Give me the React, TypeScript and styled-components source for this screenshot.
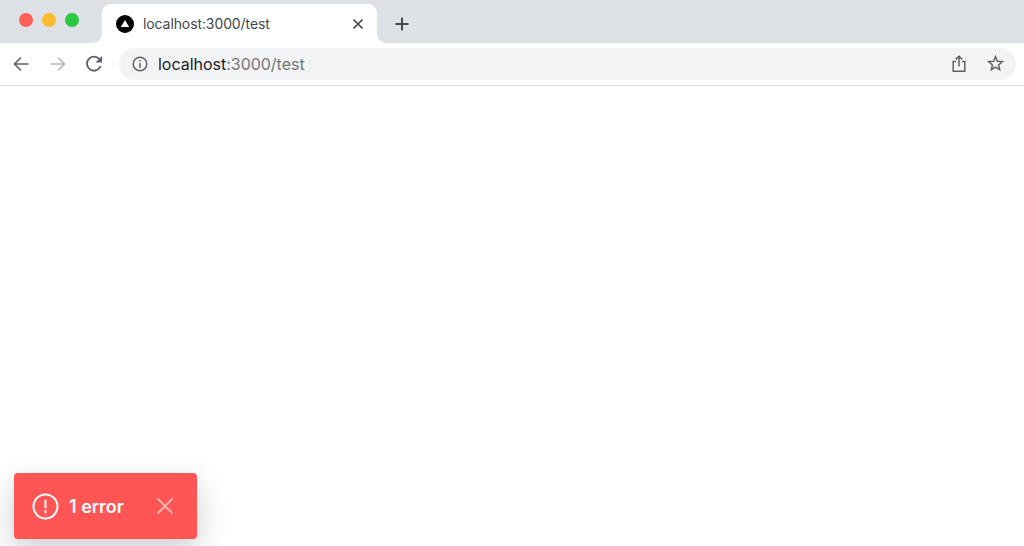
import React from "react";
import styled, { createGlobalStyle } from "styled-components";

const Global = createGlobalStyle`
  html, body { margin: 0; padding: 0; background: #fff; }
  body { font-family: Inter, "Liberation Sans", sans-serif; overflow: hidden; }
  #root { height: 546px; }
`;

const Page = styled.div`
  height: 546px;
  display: flex;
  flex-direction: column;
  position: relative;
`;

const TabStrip = styled.div`
  height: 43px;
  flex: none;
  background: #dee1e6;
  display: flex;
  align-items: flex-end;
  box-sizing: border-box;
`;

const Lights = styled.div`
  display: flex;
  gap: 9px;
  width: 102px;
  align-self: flex-start;
  box-sizing: border-box;
  padding: 13px 0 0 19px;
`;

const Light = styled.span<{ $c: string }>`
  width: 14px;
  height: 14px;
  border-radius: 50%;
  background: ${(p) => p.$c};
`;

const Tab = styled.div`
  position: relative;
  width: 275px;
  height: 39px;
  background: #fff;
  border-radius: 9px 9px 0 0;
  display: flex;
  align-items: center;
  box-sizing: border-box;
  padding: 0 13px 0 14px;
  &::before, &::after {
    content: "";
    position: absolute;
    bottom: 0;
    width: 9px;
    height: 9px;
  }
  &::before {
    left: -9px;
    background: radial-gradient(circle at 0 0, #dee1e6 8.5px, #fff 9px);
  }
  &::after {
    right: -9px;
    background: radial-gradient(circle at 100% 0, #dee1e6 8.5px, #fff 9px);
  }
`;

const TabTitle = styled.span`
  flex: 1;
  margin-left: 9px;
  font-size: 14px;
  letter-spacing: -0.1px;
  color: #45474a;
  white-space: nowrap;
`;

const NewTab = styled.div`
  width: 18px;
  height: 18px;
  margin: 0 0 10px 16px;
  display: flex;
`;

const Toolbar = styled.div`
  height: 43px;
  flex: none;
  box-sizing: border-box;
  background: #fff;
  border-bottom: 1px solid #dddee0;
  display: flex;
  align-items: center;
  padding: 0 8px 1px 12px;
`;

const NavIcons = styled.div`
  display: flex;
  align-items: center;
  gap: 19px;
  width: 107px;
`;

const Omnibox = styled.div`
  flex: 1;
  height: 32px;
  border-radius: 16px;
  background: #f1f3f4;
  display: flex;
  align-items: center;
  padding: 0 12px 0 13px;
  gap: 10px;
`;

const Url = styled.div`
  flex: 1;
  font-size: 16px;
  color: #747679;
  white-space: nowrap;
  letter-spacing: -0.02px;
`;

const Host = styled.span`
  color: #202124;
`;

const OmniActions = styled.div`
  display: flex;
  align-items: center;
  gap: 20px;
`;

const Toast = styled.div`
  position: absolute;
  left: 14px;
  bottom: 7px;
  width: 183px;
  height: 66px;
  box-sizing: border-box;
  border-radius: 4px;
  background: #ff5555;
  color: #fff;
  display: flex;
  align-items: center;
  padding: 0 23px 0 18px;
  box-shadow: 0 12px 32px rgba(0, 0, 0, 0.2);
`;

const ToastText = styled.span`
  flex: 1;
  margin-left: 10px;
  font-size: 18px;
  font-weight: 600;
  letter-spacing: 0;
`;

const Icon = styled.svg`
  display: block;
  flex: none;
`;

export default function App() {
  return (
    <Page>
      <Global />
      <TabStrip>
        <Lights>
          <Light $c="#ff5f57" />
          <Light $c="#febc2e" />
          <Light $c="#28c840" />
        </Lights>
        <Tab>
          <Icon width="18" height="18" viewBox="0 0 18 18">
            <circle cx="9" cy="9" r="9" fill="#000" />
            <path d="M9 5 L13.2 12 H4.8 Z" fill="#fff" />
          </Icon>
          <TabTitle>localhost:3000/test</TabTitle>
          <Icon width="12" height="12" viewBox="0 0 12 12" fill="none" stroke="#45474a" strokeWidth="1.7">
            <path d="M1.5 1.5 L10.5 10.5 M10.5 1.5 L1.5 10.5" />
          </Icon>
        </Tab>
        <NewTab>
          <Icon width="18" height="18" viewBox="0 0 18 18" fill="none" stroke="#45474a" strokeWidth="2">
            <path d="M9 2.5 V15.5 M2.5 9 H15.5" />
          </Icon>
        </NewTab>
      </TabStrip>
      <Toolbar>
        <NavIcons>
          <Icon width="18" height="18" viewBox="0 0 18 18" fill="none" stroke="#5f6368" strokeWidth="1.7">
            <path d="M16.5 9 H2.5 M9 2.5 L2.5 9 L9 15.5" />
          </Icon>
          <Icon width="18" height="18" viewBox="0 0 18 18" fill="none" stroke="#b6b8bb" strokeWidth="1.7">
            <path d="M1.5 9 H15.5 M9 2.5 L15.5 9 L9 15.5" />
          </Icon>
          <Icon width="18" height="18" viewBox="0 0 18 18" fill="none" stroke="#5f6368" strokeWidth="1.9">
            <path d="M14.6 11 A7 7 0 1 1 13.4 4.2" />
            <path d="M16 1 V7.4 H9.6 Z" fill="#5f6368" stroke="none" />
          </Icon>
        </NavIcons>
        <Omnibox>
          <Icon width="16" height="16" viewBox="0 0 16 16" fill="none" stroke="#5f6368" strokeWidth="1.5">
            <circle cx="8" cy="8" r="6.8" />
            <path d="M8 7 V12 M8 4 V5.6" />
          </Icon>
          <Url>
            <Host>localhost</Host>:3000/test
          </Url>
          <OmniActions>
            <Icon width="16" height="18" viewBox="0 0 16 18" fill="none" stroke="#5f6368" strokeWidth="1.5">
              <path d="M5 6.5 H2.2 V16.3 H13.8 V6.5 H11" />
              <path d="M8 11.5 V1.5 M4.8 4.4 L8 1.2 L11.2 4.4" />
            </Icon>
            <Icon width="17" height="17" viewBox="0 0 17 17" fill="none" stroke="#5f6368" strokeWidth="1.5">
              <path d="M8.5 1.8 L10.4 6.3 L15.3 6.7 L11.6 9.9 L12.7 14.7 L8.5 12.2 L4.3 14.7 L5.4 9.9 L1.7 6.7 L6.6 6.3 Z" />
            </Icon>
          </OmniActions>
        </Omnibox>
      </Toolbar>
      <Toast>
        <Icon width="27" height="27" viewBox="0 0 27 27" fill="none" stroke="#fff" strokeWidth="2">
          <circle cx="13.5" cy="13.5" r="12" />
          <path d="M13.5 7.5 V14.5 M13.5 18 V19.5" strokeLinecap="round" />
        </Icon>
        <ToastText>1 error</ToastText>
        <Icon width="18" height="18" viewBox="0 0 18 18" fill="none" stroke="#ffb3b3" strokeWidth="2">
          <path d="M1.5 1.5 L16.5 16.5 M16.5 1.5 L1.5 16.5" />
        </Icon>
      </Toast>
    </Page>
  );
}
